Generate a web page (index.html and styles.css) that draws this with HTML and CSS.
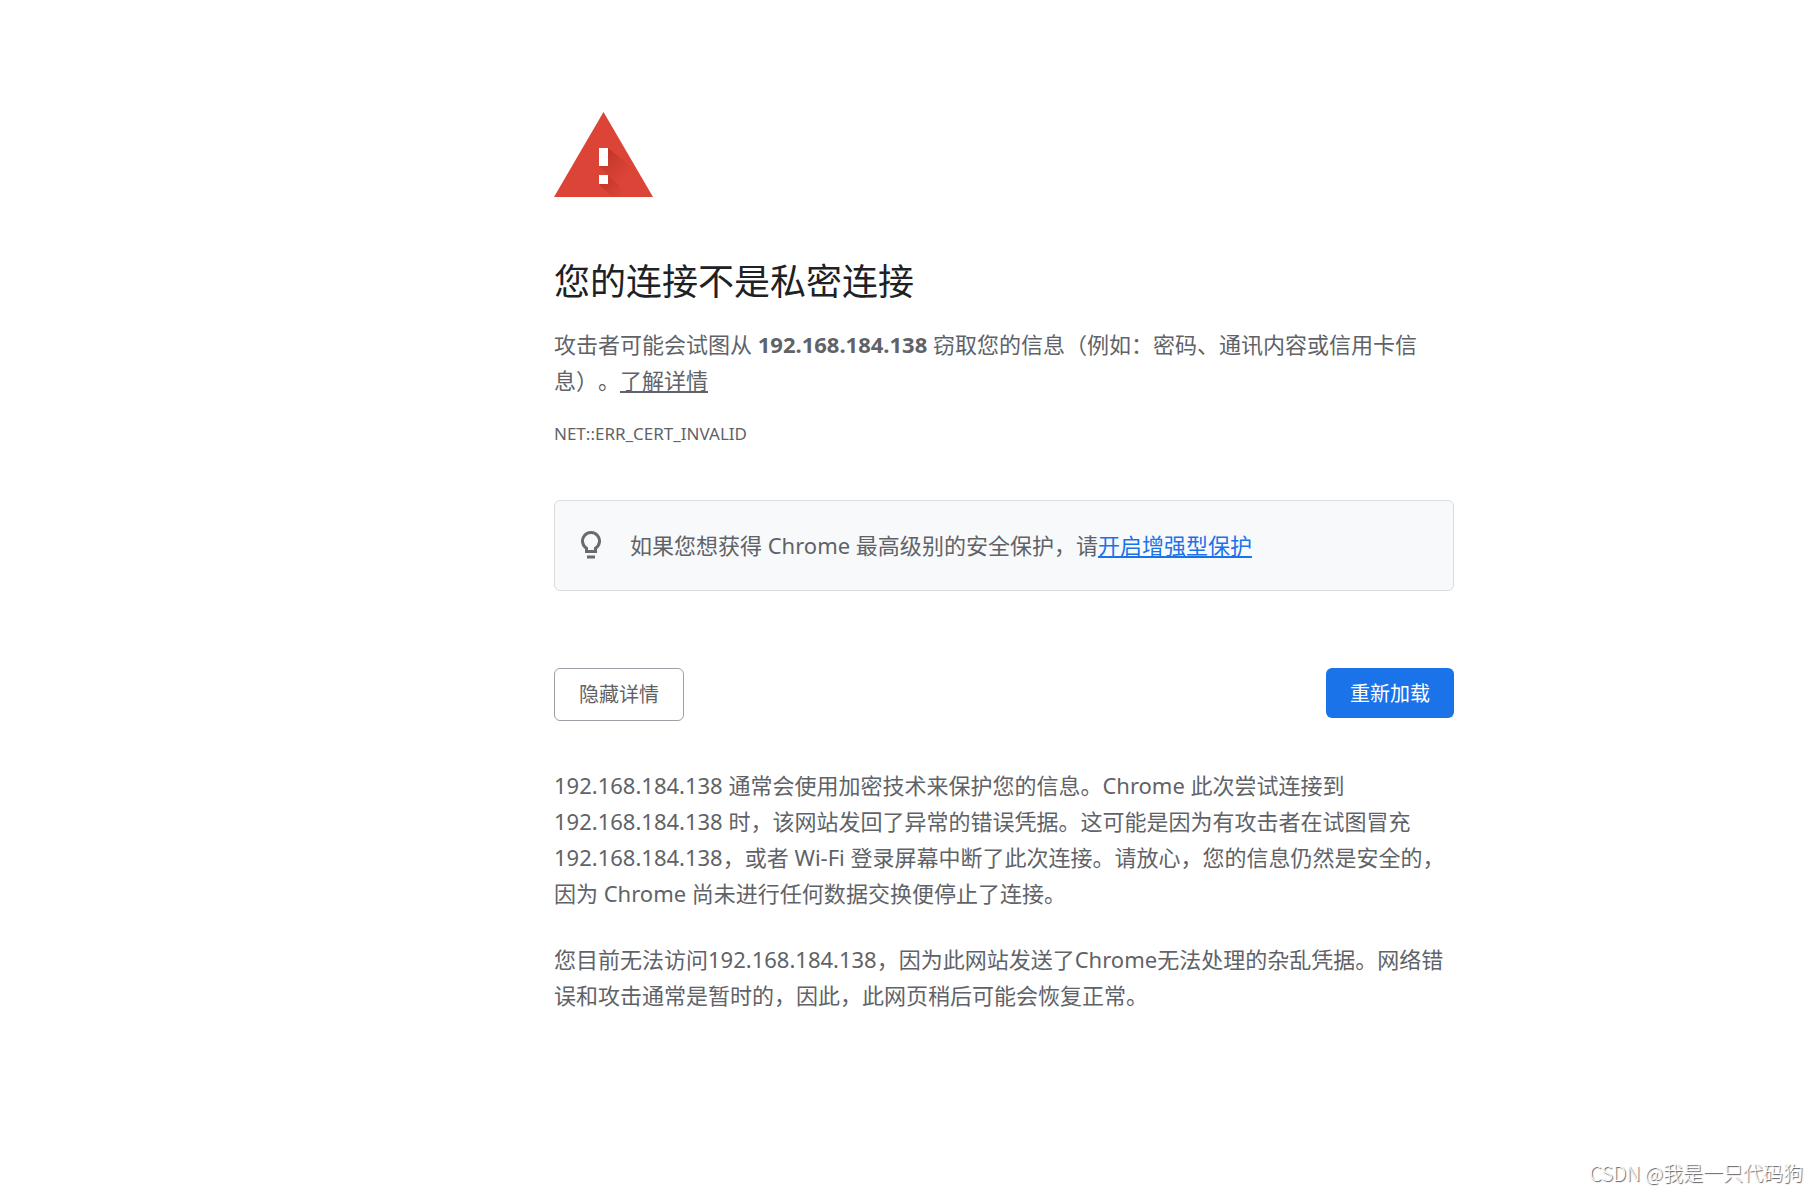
FILE: index.html
```html
<!DOCTYPE html>
<html lang="zh-CN">
<head>
    <meta charset="utf-8">
    <title>隐私设置错误</title>
    <link rel="stylesheet" href="styles.css">
</head>
<body>
    <main class="interstitial">
        <svg class="warning-icon" viewBox="0 0 99 85" aria-hidden="true">
            <defs>
                <linearGradient id="shadow-top" gradientUnits="userSpaceOnUse" x1="48" y1="44" x2="70" y2="66">
                    <stop offset="0" stop-color="#a52714" stop-opacity="0.45"/>
                    <stop offset="1" stop-color="#a52714" stop-opacity="0"/>
                </linearGradient>
                <linearGradient id="shadow-bottom" gradientUnits="userSpaceOnUse" x1="49" y1="67" x2="66" y2="84">
                    <stop offset="0" stop-color="#a52714" stop-opacity="0.45"/>
                    <stop offset="1" stop-color="#a52714" stop-opacity="0"/>
                </linearGradient>
            </defs>
            <path fill="#db4437" d="M49.500 0L99 85H0z"/>
            <path fill="url(#shadow-top)" d="M54 36L84 60 98 84 76 85 54 63 45 54H54z"/>
            <path fill="url(#shadow-bottom)" d="M54 63L76 85H58L45 72z"/>
            <path fill="#fff" d="M45 36h9v18h-9zM45 63h9v9h-9z"/>
        </svg>

        <h1 class="title">您的连接不是私密连接</h1>
        <p class="text">攻击者可能会试图从 <strong>192.168.184.138</strong> 窃取您的信息（例如：密码、通讯内容或信用卡信息）。<a class="learn-more" href="#">了解详情</a></p>
        <div class="error-code">NET::ERR_CERT_INVALID</div>

        <div class="promo">
            <svg class="bulb-icon" viewBox="0 0 20 28" aria-hidden="true">
                <path fill="none" stroke="#6b6b6b" stroke-width="3" d="M5.500 20.500V17.200A8.500 8.500 0 1 1 14.500 17.200V20.500z"/>
                <path fill="#6b6b6b" d="M6 24.500h8v3H6z"/>
            </svg>
            <p>如果您想获得 Chrome 最高级别的安全保护，请<a href="#">开启增强型保护</a></p>
        </div>

        <div class="buttons">
            <button class="button secondary" id="details-button">隐藏详情</button>
            <button class="button primary" id="reload-button">重新加载</button>
        </div>

        <div class="details" id="details">
            <p class="text">192.168.184.138 通常会使用加密技术来保护您的信息。Chrome 此次尝试连接到 192.168.184.138 时，该网站发回了异常的错误凭据。这可能是因为有攻击者在试图冒充 192.168.184.138，或者 Wi-Fi 登录屏幕中断了此次连接。请放心，您的信息仍然是安全的，因为 Chrome 尚未进行任何数据交换便停止了连接。</p>
            <p class="text">您目前无法访问192.168.184.138，因为此网站发送了Chrome无法处理的杂乱凭据。网络错误和攻击通常是暂时的，因此，此网页稍后可能会恢复正常。</p>
        </div>
    </main>

    <div class="watermark">CSDN @我是一只代码狗</div>
</body>
</html>
```
FILE: styles.css
```css
body {
    margin: 0;
    padding: 112px 0 112px 190px;
    background-color: #fff;
    color: #5f6368;
    font-family: "Noto Sans", "Noto Sans CJK SC", sans-serif;
    font-size: 22px;
    line-height: 36px;
    text-spacing-trim: space-all;
}

.interstitial {
    max-width: 900px;
    margin: 0 auto;
}

.warning-icon {
    display: block;
    width: 99px;
    height: 85px;
}

.title {
    margin: 63px 0 22px;
    color: #202124;
    font-size: 36px;
    font-weight: 400;
    line-height: 44px;
}

.text {
    margin: 0;
}

.learn-more {
    color: #5f6368;
}

.error-code {
    margin-top: 22px;
    font-size: 17px;
    line-height: 28px;
}

.promo {
    display: flex;
    align-items: center;
    gap: 29px;
    margin: 52px 0 77px;
    padding: 26px;
    padding-bottom: 27px;
    border: 1px solid #dadce0;
    border-radius: 6px;
    background-color: #f8f9fb;
}

.promo p {
    margin: 0;
}

.promo a {
    color: #1a73e8;
}

.bulb-icon {
    width: 20px;
    height: 28px;
}

.buttons {
    display: flex;
    justify-content: space-between;
    align-items: flex-start;
}

.button {
    padding: 13px 24px 11px;
    border: 0;
    border-radius: 6px;
    font-family: inherit;
    font-size: 20px;
    line-height: 26px;
    cursor: pointer;
}

.primary {
    background-color: #1a73e8;
    color: #fff;
}

.secondary {
    padding-bottom: 12px;
    border: 1px solid #9aa0a6;
    background-color: #fff;
    color: #5f6368;
}

.details {
    display: flex;
    flex-direction: column;
    gap: 30px;
    margin-top: 46px;
}

.watermark {
    position: absolute;
    right: 15px;
    bottom: 7px;
    color: #fff;
    font-family: "Noto Sans CJK SC", sans-serif;
    font-size: 20px;
    font-weight: 300;
    line-height: 28px;
    text-shadow: 1px 1px 1px #555;
}
```
